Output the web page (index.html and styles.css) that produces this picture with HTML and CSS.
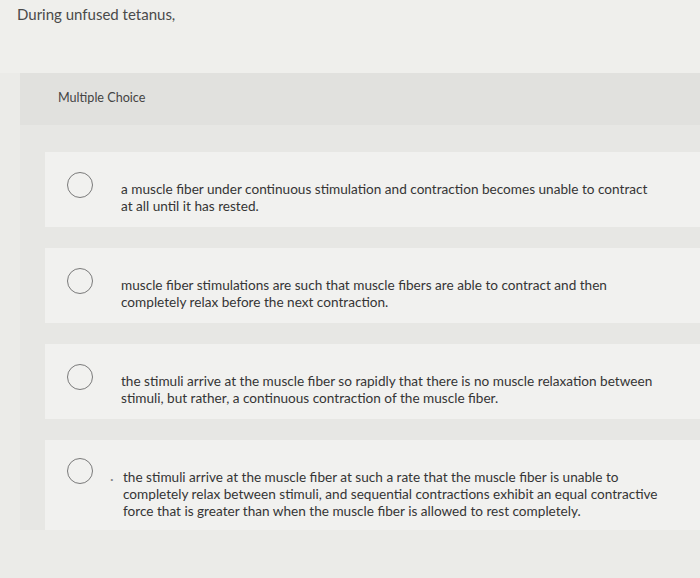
FILE: index.html
```html
<!DOCTYPE html>
<html>
<head>
<meta charset="utf-8">
<link rel="stylesheet" href="styles.css">
</head>
<body>
<div class="page">
  <div class="prompt">During unfused tetanus,</div>
  <div class="question">
    <div class="qtype">Multiple Choice</div>
    <div class="options">
      <div class="option">
        <span class="radio"></span>
        <p class="label">a muscle fiber under continuous stimulation and contraction becomes unable to contract at all until it has rested.</p>
      </div>
      <div class="option">
        <span class="radio"></span>
        <p class="label">muscle fiber stimulations are such that muscle fibers are able to contract and then completely relax before the next contraction.</p>
      </div>
      <div class="option">
        <span class="radio"></span>
        <p class="label">the stimuli arrive at the muscle fiber so rapidly that there is no muscle relaxation between stimuli, but rather, a continuous contraction of the muscle fiber.</p>
      </div>
      <div class="option option-last">
        <span class="radio"></span>
        <span class="dot">·</span>
        <p class="label">the stimuli arrive at the muscle fiber at such a rate that the muscle fiber is unable to completely relax between stimuli, and sequential contractions exhibit an equal contractive force that is greater than when the muscle fiber is allowed to rest completely.</p>
      </div>
    </div>
  </div>
</div>
</body>
</html>
```
FILE: styles.css
```css
html, body {
  margin: 0;
  padding: 0;
  background: #ebebe8;
}
.page {
  width: 700px;
  height: 578px;
  overflow: hidden;
  font-family: "Lato", "Open Sans", sans-serif;
  color: #353535;
  background: #ebebe8;
}
.prompt {
  height: 73px;
  box-sizing: border-box;
  padding: 5px 0 0 17px;
  font-size: 15px;
  color: #4a4a4a;
  background: #efefec;
}
.question {
  margin-left: 20px;
  background: #e7e7e4;
}
.qtype {
  height: 52px;
  box-sizing: border-box;
  padding: 17px 0 0 38px;
  font-size: 12.6px;
  background: #e1e1de;
  color: #444;
}
.options {
  display: flex;
  flex-direction: column;
  gap: 21px;
  padding: 27px 0 0 25px;
}
.option {
  display: flex;
  align-items: flex-start;
  min-height: 75px;
  box-sizing: border-box;
  padding: 20px 0 10px 22px;
  background: #f1f1ef;
}
.option-last {
  min-height: 90px;
  padding-top: 18px;
}
.radio {
  flex: none;
  width: 24px;
  height: 24px;
  border: 1.5px solid #7a7a7a;
  border-radius: 50%;
  margin-right: 28px;
}
.option-last .radio {
  margin-right: 17px;
}
.dot {
  flex: none;
  width: 13px;
  margin-top: 9px;
  font-size: 14px;
  color: #888;
  line-height: 24px;
}
.label {
  margin: 9px 0 0;
  width: 537px;
  font-size: 13.6px;
  line-height: 17px;
}
.option-last .label {
  margin-top: 11px;
}
```
